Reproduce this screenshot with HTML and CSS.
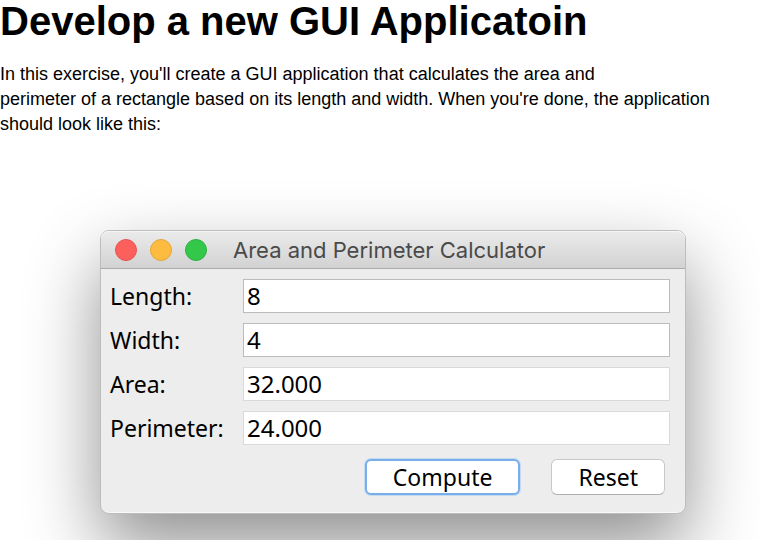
FILE: index.html
```html
<!DOCTYPE html>
<html lang="en">
<head>
    <meta charset="UTF-8">
    <meta name="viewport" content="width=device-width, initial-scale=1.0">
    <title>Develop a new GUI Applicatoin</title>
    <link rel="stylesheet" href="styles.css">
</head>
<body>
    <h1>Develop a new GUI Applicatoin</h1>
    <p>In this exercise, you'll create a GUI application that calculates the area and<br>
    perimeter of a rectangle based on its length and width. When you're done, the application should look like this:</p>

    <div class="window">
        <div class="titlebar">
            <div class="lights">
                <span class="light red"></span>
                <span class="light yellow"></span>
                <span class="light green"></span>
            </div>
            <h2>Area and Perimeter Calculator</h2>
        </div>
        <form class="calculator">
            <div class="fields">
                <label for="length">Length:</label>
                <input type="text" id="length" value="8">
                <label for="width">Width:</label>
                <input type="text" id="width" value="4">
                <label for="area">Area:</label>
                <input type="text" id="area" value="32.000" readonly>
                <label for="perimeter">Perimeter:</label>
                <input type="text" id="perimeter" value="24.000" readonly>
            </div>
            <div class="buttons">
                <button type="button" class="compute">Compute</button>
                <button type="reset" class="reset">Reset</button>
            </div>
        </form>
    </div>
</body>
</html>
```

FILE: styles.css
```css
* {
    box-sizing: border-box;
}
body {
    min-height: 100vh;
    margin: 0;
    background-color: white;
    color: black;
    font-family: Arial, "Liberation Sans", sans-serif;
    font-size: 18px;
    line-height: 25px;
}
h1 {
    margin: 0 0 20px;
    font-size: 40px;
    line-height: 42px;
}
p {
    margin: 0;
    padding-right: 30px;
}
.window {
    margin: 93px 75px 0 100px;
    border: 1px solid #bdbdbd;
    border-radius: 9px;
    background-color: #ededed;
    box-shadow: inset 0 -1px #f8f8f8, 0 32px 72px rgba(0, 0, 0, 0.44);
}
.titlebar {
    display: flex;
    align-items: center;
    height: 38px;
    padding-left: 14px;
    border-bottom: 1px solid #ababab;
    border-radius: 8px 8px 0 0;
    background: linear-gradient(#ebebeb, #d2d2d2);
    box-shadow: inset 0 1px #f6f6f6;
}
.lights {
    display: flex;
    gap: 13px;
}
.light {
    width: 22px;
    height: 22px;
    border: 1px solid;
    border-radius: 50%;
}
.red {
    background-color: #fc605c;
    border-color: #e8524e;
}
.yellow {
    background-color: #fdbc40;
    border-color: #e3a63a;
}
.green {
    background-color: #34c84a;
    border-color: #2bb03c;
}
h2 {
    margin: 0 0 0 26px;
    padding-top: 2px;
    color: #4a4a4a;
    font-family: Inter, sans-serif;
    font-size: 22px;
    font-weight: 400;
}
.calculator {
    padding: 10px 15px 18px 9px;
    font-family: "Lucida Grande", "Noto Sans", sans-serif;
    font-size: 23px;
}
.fields {
    display: grid;
    grid-template-columns: 123px 1fr;
    align-items: center;
    gap: 10px;
}
.fields input {
    width: 100%;
    height: 34px;
    padding: 0 3px 2px;
    border: 1px solid #bcbcbc;
    background-color: white;
    color: black;
    font: inherit;
    font-size: 24px;
    outline: none;
}
.fields input[readonly] {
    border-color: #d9d9d9;
}
.buttons {
    display: flex;
    justify-content: flex-end;
    gap: 31px;
    padding: 14px 5px 0 0;
}
button {
    height: 36px;
    padding: 0 26px;
    border: 1px solid #c8c8c8;
    border-bottom-color: #b0b0b0;
    border-radius: 6px;
    background-color: white;
    color: black;
    font: inherit;
}
.compute {
    border: 2px solid #79aee9;
    box-shadow: 0 0 0 1px #c5d9f0;
}
```
